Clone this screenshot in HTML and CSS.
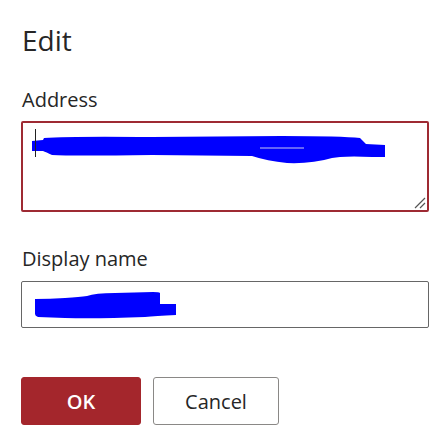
FILE: index.html
```html
<!DOCTYPE html>
<html lang="en">
<head>
<meta charset="utf-8">
<title>Edit</title>
<link rel="stylesheet" href="styles.css">
</head>
<body>
<main class="panel">
  <h1 class="title">Edit</h1>

  <label class="label">Address</label>
  <div class="textarea">
    <span class="caret"></span>
    <svg class="scribble-a" width="356" height="30" viewBox="0 0 356 30">
      <path d="M0 6 L11 5 L12 3 Q40 1 120 2 L250 1 Q310 1 328 3 L334 9 L353 10 L353 22 L340 22 Q320 21 308 22 L300 23 Q280 29 255 28 Q235 26 220 21 L120 20 Q40 21 20 20 Q14 17 11 16 L0 16 Z" fill="#0000ff"/>
      <path d="M228 13 L272 13" stroke="#c8c8f0" stroke-width="1"/>
    </svg>
    <svg class="grip" width="12" height="12" viewBox="0 0 12 12">
      <path d="M1 11 L11 1 M6 11 L11 6" stroke="#555" stroke-width="1.2" fill="none"/>
    </svg>
  </div>

  <label class="label label-second">Display name</label>
  <div class="input">
    <svg class="scribble-b" width="142" height="28" viewBox="0 0 142 28">
      <path d="M0 7 Q15 7 30 6 Q45 5 52 4 Q60 1 80 1 L118 0 Q124 0 125 1 L125 12 L141 12 L141 23 Q120 24 110 25 Q60 27 30 26 L3 25 Q0 24 0 22 Z" fill="#0000ff"/>
    </svg>
  </div>

  <div class="actions">
    <button class="btn btn-primary" type="button">OK</button>
    <button class="btn btn-default" type="button">Cancel</button>
  </div>
</main>
</body>
</html>
```

FILE: styles.css
```css
* {
  box-sizing: border-box;
}

html, body {
  margin: 0;
  padding: 0;
  background: #ffffff;
}

body {
  font-family: "Open Sans", "Noto Sans", sans-serif;
  color: #262626;
}

.panel {
  padding: 22px 19px 0 21px;
  display: flex;
  flex-direction: column;
}

.title {
  margin: 0;
  font-size: 28px;
  font-weight: 400;
  line-height: 37px;
  padding-left: 1px;
}

.label {
  display: block;
  font-size: 20px;
  line-height: 28px;
  margin-top: 27px;
  margin-bottom: 7px;
  padding-left: 1px;
}

.label-second {
  margin-top: 33px;
  margin-bottom: 8px;
}

.textarea {
  position: relative;
  height: 91px;
  border: 2px solid #9e2a33;
  border-radius: 2px;
  padding: 12px 0 0 9px;
}

.caret {
  position: absolute;
  left: 12px;
  top: 6px;
  width: 1px;
  height: 28px;
  background: #222;
}

.scribble-a {
  display: block;
}

.grip {
  position: absolute;
  right: 1px;
  bottom: 1px;
}

.input {
  height: 47px;
  border: 1px solid #666666;
  border-radius: 2px;
  padding: 10px 0 0 13px;
}

.scribble-b {
  display: block;
}

.actions {
  display: flex;
  gap: 12px;
  margin-top: 49px;
}

.btn {
  height: 48px;
  border-radius: 3px;
  font-family: "Open Sans", "Noto Sans", sans-serif;
  font-size: 20px;
  padding: 0;
  cursor: pointer;
}

.btn-primary {
  width: 120px;
  background: #a4262c;
  border: 1px solid #a4262c;
  color: #ffffff;
  font-weight: 600;
}

.btn-default {
  width: 126px;
  background: #ffffff;
  border: 1px solid #8a8886;
  color: #262626;
}
```
